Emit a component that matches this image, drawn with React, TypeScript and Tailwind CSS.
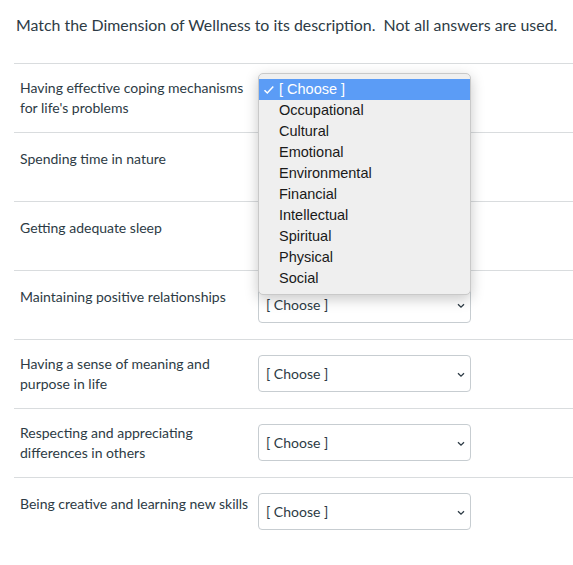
import React from "react";

const rows: { label: string[]; two: boolean }[] = [
  { label: ["Having effective coping mechanisms", "for life's problems"], two: true },
  { label: ["Spending time in nature"], two: false },
  { label: ["Getting adequate sleep"], two: false },
  { label: ["Maintaining positive relationships"], two: false },
  { label: ["Having a sense of meaning and", "purpose in life"], two: true },
  { label: ["Respecting and appreciating", "differences in others"], two: true },
  { label: ["Being creative and learning new skills"], two: false },
];

const options = [
  "Occupational",
  "Cultural",
  "Emotional",
  "Environmental",
  "Financial",
  "Intellectual",
  "Spiritual",
  "Physical",
  "Social",
];

function Chevron() {
  return (
    <svg width="8" height="6" viewBox="0 0 8 6" className="absolute right-[5px] top-[16px]">
      <path d="M1 1.2 L4 4.2 L7 1.2" fill="none" stroke="#2d3b45" strokeWidth="1.3" />
    </svg>
  );
}

function Popup() {
  return (
    <div
      className="absolute left-[-1px] top-[-7px] z-10 w-[213px] rounded-[5px] border border-[#c9c9c9] bg-[#efefef] pt-[5px] pb-[5px] shadow-[0_4px_14px_rgba(0,0,0,0.22)]"
      style={{ fontFamily: '"Liberation Sans", Arial, sans-serif' }}
    >
      <div className="relative flex h-[21px] items-center bg-[#5b9cf6] pl-[20px] text-[14.5px] text-white">
        <svg width="12" height="10" viewBox="0 0 12 10" className="absolute left-[4px] top-[6px]">
          <path d="M1.5 5.2 L4.3 8 L10.3 1.5" fill="none" stroke="#ffffff" strokeWidth="1.5" />
        </svg>
        <span>[ Choose ]</span>
      </div>
      {options.map((o) => (
        <div key={o} className="flex h-[21px] items-center pl-[20px] text-[14.5px] text-[#1a1a1a]">
          {o}
        </div>
      ))}
    </div>
  );
}

export default function App() {
  return (
    <div
      className="w-[573px] h-[565px] bg-white text-[#2d3b45]"
      style={{ fontFamily: 'Lato, "Noto Sans", sans-serif' }}
    >
      <div className="pl-[16px] pt-[13px] text-[15.9px] leading-[24px]">
        Match the Dimension of Wellness to its description.&nbsp; Not all answers are used.
      </div>
      <div className="mt-[26px] ml-[14px]">
        {rows.map((r, i) => (
          <div key={i} className="flex h-[69px] border-t border-[#d9dcde]">
            <div
              className={
                "w-[238px] pl-[6px] text-[14px] leading-[20px] " +
                (r.two ? "pt-[14px]" : "pt-[16px]")
              }
            >
              {r.label.map((l, j) => (
                <div key={j} className="whitespace-nowrap">
                  {l}
                </div>
              ))}
            </div>
            <div className="pl-[6px] pt-[15px]">
              <div className="relative flex h-[37px] w-[213px] items-center rounded-[4px] border border-[#c7cdd1] bg-white">
                <div className="pl-[7px] text-[14px] leading-[20px] text-[#2d3b45]">[ Choose ]</div>
                <Chevron />
                {i === 0 && <Popup />}
              </div>
            </div>
          </div>
        ))}
      </div>
    </div>
  );
}
